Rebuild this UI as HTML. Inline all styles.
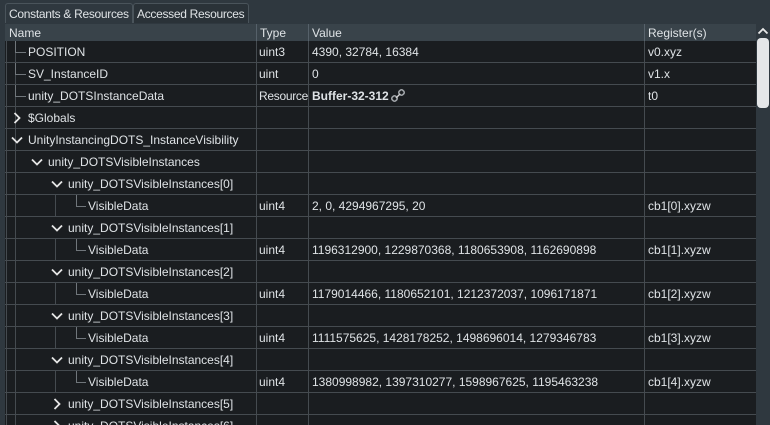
<!DOCTYPE html>
<html style="overflow:hidden;height:425px"><head><style>
body{margin:0;width:770px;height:425px;overflow:hidden;background:#2f383f;font-family:"Liberation Sans",sans-serif;font-size:12px;color:#dfe3e6;position:relative}
.a{position:absolute;white-space:nowrap}
.tab{position:absolute;top:3px;height:20px;line-height:20px;border:1px solid #4a545b;border-bottom:none;border-radius:3px 3px 0 0;padding-left:3px;box-sizing:border-box;white-space:nowrap;overflow:hidden;letter-spacing:-0.3px}
.hdr{position:absolute;top:24px;left:5px;width:751px;height:17px;background:#39434a;border-bottom:1px solid #56616a}
.body{position:absolute;top:41px;left:5px;width:751px;height:384px;background:#1a1d20}
.hl{position:absolute;left:5px;width:751px;height:1px;background:#454b50}
.vl{position:absolute;width:1px;background:#454b50}
.tl{position:absolute;background:#70767b}
#wrap{position:absolute;left:0;top:0;width:770px;height:425px;overflow:hidden}
</style></head><body><div id="wrap">
<div class="tab" style="left:5px;width:128px;background:#2f383f">Constants &amp; Resources</div>
<div class="tab" style="left:133px;width:116px;background:#2a3238">Accessed Resources</div>
<div class="hdr"></div>
<div class="a" style="left:9px;top:26px">Name</div>
<div class="a" style="left:260px;top:26px">Type</div>
<div class="a" style="left:312px;top:26px">Value</div>
<div class="a" style="left:648px;top:26px">Register(s)</div>
<div class="vl" style="left:256px;top:24px;height:17px;background:#56616a"></div>
<div class="vl" style="left:308px;top:24px;height:17px;background:#56616a"></div>
<div class="vl" style="left:644px;top:24px;height:17px;background:#56616a"></div>
<div class="body"></div>
<div id="g"></div>
<div class="a" style="left:756px;top:24px;width:14px;height:401px;background:#2f383f"></div>
<svg class="a" style="left:757px;top:27px" width="12" height="8"><path d="M1.5 6.5L6 2L10.5 6.5" stroke="#e8e8e8" stroke-width="1.8" fill="none"/></svg>
<div class="a" style="left:757px;top:38px;width:12px;height:70px;background:#e4e6e8;border-radius:4px"></div>
</div>
<script>
var rows=[
[0,'l','POSITION','uint3','4390, 32784, 16384','v0.xyz'],
[0,'l','SV_InstanceID','uint','0','v1.x'],
[0,'l','unity_DOTSInstanceData','Resource','B','t0'],
[0,'c','$Globals','','',''],
[0,'o','UnityInstancingDOTS_InstanceVisibility','','',''],
[1,'o','unity_DOTSVisibleInstances','','',''],
[2,'o','unity_DOTSVisibleInstances[0]','','',''],
[3,'l','VisibleData','uint4','2, 0, 4294967295, 20','cb1[0].xyzw'],
[2,'o','unity_DOTSVisibleInstances[1]','','',''],
[3,'l','VisibleData','uint4','1196312900, 1229870368, 1180653908, 1162690898','cb1[1].xyzw'],
[2,'o','unity_DOTSVisibleInstances[2]','','',''],
[3,'l','VisibleData','uint4','1179014466, 1180652101, 1212372037, 1096171871','cb1[2].xyzw'],
[2,'o','unity_DOTSVisibleInstances[3]','','',''],
[3,'l','VisibleData','uint4','1111575625, 1428178252, 1498696014, 1279346783','cb1[3].xyzw'],
[2,'o','unity_DOTSVisibleInstances[4]','','',''],
[3,'l','VisibleData','uint4','1380998982, 1397310277, 1598967625, 1195463238','cb1[4].xyzw'],
[2,'c','unity_DOTSVisibleInstances[5]','','',''],
[2,'c','unity_DOTSVisibleInstances[6]','','','']];
var h='';
rows.forEach(function(r,i){
 var y=41+i*22;
 h+='<div class="hl" style="top:'+(y+21)+'px"></div>';
 h+='<div class="vl" style="left:256px;top:'+y+'px;height:22px"></div><div class="vl" style="left:308px;top:'+y+'px;height:22px"></div><div class="vl" style="left:644px;top:'+y+'px;height:22px"></div>';
 h+='<div class="vl" style="left:6px;top:'+y+'px;height:22px"></div><div class="vl" style="left:15px;top:'+y+'px;height:22px"></div>';
 var lv=r[0],tx=28+lv*20;if(lv==3)tx=88;
 if(r[1]=='l'){var bx=(lv==3?76:15);h+='<div class="tl" style="left:'+bx+'px;top:'+y+'px;width:1px;height:12px"></div><div class="tl" style="left:'+bx+'px;top:'+(y+11)+'px;width:'+(tx-bx-2)+'px;height:1px"></div>';}
 if(lv==3)h+='<div class="vl" style="left:55px;top:'+y+'px;height:22px"></div>';
 if(r[1]=='o'){h+='<svg class="a" style="left:'+(tx-17)+'px;top:'+(y+7)+'px" width="12" height="8"><path d="M1 1.5L6 6.5L11 1.5" stroke="#e6e6e6" stroke-width="1.8" fill="none"/></svg>';}
 if(r[1]=='c'){h+='<svg class="a" style="left:'+(tx-15)+'px;top:'+(y+5)+'px" width="8" height="12"><path d="M1.5 1L6.5 6L1.5 11" stroke="#e6e6e6" stroke-width="1.8" fill="none"/></svg>';}
 h+='<div class="a" style="left:'+tx+'px;top:'+(y+4)+'px">'+r[2]+'</div>';
 h+='<div class="a" style="left:259px;top:'+(y+4)+'px;'+(r[3]=='Resource'?'letter-spacing:-0.3px':'')+'">'+r[3]+'</div>';
 if(r[4]=='B'){h+='<div class="a" style="left:312px;top:'+(y+4)+'px;font-weight:bold">Buffer-32-312</div><svg class="a" style="left:391px;top:'+(y+4)+'px" width="14" height="14"><rect x="1" y="7" width="5" height="5" rx="2" stroke="#a0a4a8" stroke-width="1.6" fill="none" transform="rotate(-45 3.5 9.5)"/><rect x="8" y="1" width="5" height="5" rx="2" stroke="#a0a4a8" stroke-width="1.6" fill="none" transform="rotate(-45 10.5 3.5)"/><path d="M5 9L9 5" stroke="#d0d0d0" stroke-width="1.4"/></svg>';}
 else h+='<div class="a" style="left:312px;top:'+(y+4)+'px">'+r[4]+'</div>';
 h+='<div class="a" style="left:648px;top:'+(y+4)+'px">'+r[5]+'</div>';
});
document.getElementById('g').innerHTML=h;
</script>
</body></html>
